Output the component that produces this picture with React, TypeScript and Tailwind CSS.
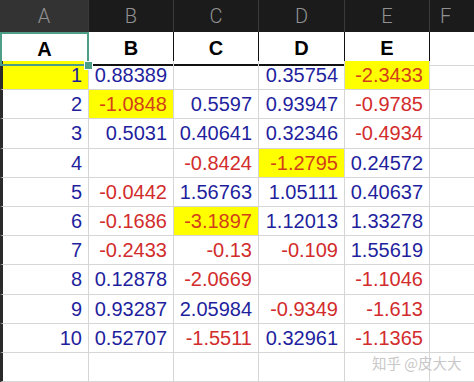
import React from "react";

type Cell = { v: string; y?: boolean };

const rows: Cell[][] = [
  [{ v: "1", y: true }, { v: "0.88389" }, { v: "" }, { v: "0.35754" }, { v: "-2.3433", y: true }],
  [{ v: "2" }, { v: "-1.0848", y: true }, { v: "0.5597" }, { v: "0.93947" }, { v: "-0.9785" }],
  [{ v: "3" }, { v: "0.5031" }, { v: "0.40641" }, { v: "0.32346" }, { v: "-0.4934" }],
  [{ v: "4" }, { v: "" }, { v: "-0.8424" }, { v: "-1.2795", y: true }, { v: "0.24572" }],
  [{ v: "5" }, { v: "-0.0442" }, { v: "1.56763" }, { v: "1.05111" }, { v: "0.40637" }],
  [{ v: "6" }, { v: "-0.1686" }, { v: "-3.1897", y: true }, { v: "1.12013" }, { v: "1.33278" }],
  [{ v: "7" }, { v: "-0.2433" }, { v: "-0.13" }, { v: "-0.109" }, { v: "1.55619" }],
  [{ v: "8" }, { v: "0.12878" }, { v: "-2.0669" }, { v: "" }, { v: "-1.1046" }],
  [{ v: "9" }, { v: "0.93287" }, { v: "2.05984" }, { v: "-0.9349" }, { v: "-1.613" }],
  [{ v: "10" }, { v: "0.52707" }, { v: "-1.5511" }, { v: "0.32961" }, { v: "-1.1365" }],
];

const font = { fontFamily: '"Liberation Sans", Arial, sans-serif' };

export default function App() {
  return (
    <div
      className="relative w-[474px] h-[382px] overflow-hidden bg-white"
      style={font}
    >
      {/* top dark column bar */}
      <div className="grid grid-cols-[89px_85px_85px_86px_85px_1fr] h-[32px] bg-[#1b1b1b]">
        {["A", "B", "C", "D", "E", "F"].map((l, i) => (
          <div
            key={l}
            className={`flex items-center justify-center text-[20px] font-light text-[#929292] border-r border-[#3a3a3a] ${
              i === 0 ? "bg-[#333333]" : ""
            } ${i === 5 ? "justify-start pl-[10px] border-r-0" : ""}`}
            style={{ fontFamily: 'Roboto, "Liberation Sans", sans-serif' }}
          >
            {l}
          </div>
        ))}
      </div>

      {/* header row */}
      <div className="grid grid-cols-[89px_85px_85px_86px_85px_1fr] h-[29px]">
        <div className="relative flex items-center justify-center border-2 border-[#4e9d86] text-[20px] font-bold text-black">
          A
          <div className="absolute right-[-6px] bottom-[-6px] w-[9px] h-[9px] bg-[#4e9d86] border border-white z-10" />
        </div>
        {["B", "C", "D", "E"].map((l) => (
          <div
            key={l}
            className="flex items-center justify-center border-r-[1.5px] border-b-2 border-[#111111] text-[20px] font-bold text-black"
          >
            {l}
          </div>
        ))}
        <div className="border-b border-[#d6d6d6]" />
      </div>

      {/* data rows */}
      {rows.map((r, ri) => (
        <div
          key={ri}
          className="grid grid-cols-[89px_85px_85px_86px_85px_1fr] h-[29.2px]"
        >
          {r.map((c, ci) => {
            const neg = c.v.startsWith("-");
            const color = c.y
              ? ci === 0
                ? "text-[#1f1f9e]"
                : "text-[#d2401a]"
              : ci === 0
              ? "text-[#1f1f9e]"
              : neg
              ? "text-[#d22c2c]"
              : "text-[#1f1f9e]";
            return (
              <div
                key={ci}
                className={`flex items-center justify-end pr-[6px] text-[20px] leading-none border-r border-b border-[#d6d6d6] ${
                  ci === 0 ? "border-l-[3px] border-l-[#2a2a2a]" : ""
                } ${c.y ? "bg-[#ffff00]" : ""} ${color}`}
              >
                {c.v}
              </div>
            );
          })}
          <div className="border-b border-[#d6d6d6]" />
        </div>
      ))}

      {/* trailing empty row */}
      <div className="grid grid-cols-[89px_85px_85px_86px_85px_1fr] h-[29px]">
        <div className="border-l-[3px] border-l-[#2a2a2a] border-r border-b border-[#d6d6d6]" />
        <div className="border-r border-b border-[#d6d6d6]" />
        <div className="border-r border-b border-[#d6d6d6]" />
        <div className="border-r border-b border-[#d6d6d6]" />
        <div className="border-r border-b border-[#d6d6d6]" />
        <div className="border-b border-[#d6d6d6]" />
      </div>

      {/* watermark */}
      <div
        className="absolute left-[372px] top-[352px] text-[14.5px] text-[#c8c8c8] whitespace-nowrap"
        style={{ fontFamily: '"Noto Sans CJK SC", "Liberation Sans", sans-serif' }}
      >
        知乎 @皮大大
      </div>
    </div>
  );
}
